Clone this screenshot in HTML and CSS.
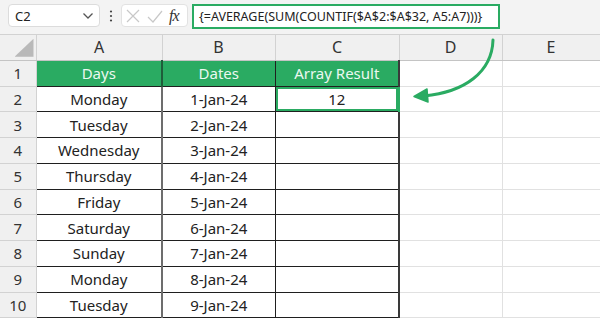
FILE: index.html
```html
<!DOCTYPE html>
<html lang="en">
<head>
  <meta charset="UTF-8" />
  <title>Array formula</title>
  <link rel="stylesheet" href="styles.css">
</head>
<body>

  <div class="toolbar">
    <div class="name-box">
      <span>C2</span>
      <svg class="chev" width="12" height="8" viewBox="0 0 12 8"><path d="M1.5 1.5 L6 6 L10.5 1.5" fill="none" stroke="#555" stroke-width="1.3"/></svg>
    </div>
    <div class="dots">
      <svg width="4" height="14" viewBox="0 0 4 14"><circle cx="2" cy="2.5" r="1.1" fill="#444"/><circle cx="2" cy="7" r="1.1" fill="#444"/><circle cx="2" cy="11.5" r="1.1" fill="#444"/></svg>
    </div>
    <div class="fx-box">
      <svg width="16" height="16" viewBox="0 0 16 16"><path d="M2 2 L14 14 M14 2 L2 14" stroke="#c8c8c8" stroke-width="1.2"/></svg>
      <svg width="18" height="16" viewBox="0 0 18 16"><path d="M2 9 L7 14 L16 3" fill="none" stroke="#c8c8c8" stroke-width="1.2"/></svg>
      <span class="fx"><i>f</i><i>x</i></span>
    </div>
    <div class="formula">{=AVERAGE(SUM(COUNTIF($A$2:$A$32, A5:A7)))}</div>
  </div>

  <div class="sheet">
    <table class="grid">
      <colgroup>
        <col class="c-row"><col class="c-a"><col class="c-b"><col class="c-c"><col class="c-d"><col class="c-e">
      </colgroup>
      <tr class="col-heads">
        <th class="corner"><div class="tri"></div></th>
        <th>A</th><th>B</th><th>C</th><th>D</th><th>E</th>
      </tr>
      <tr>
        <th>1</th>
        <td class="hd first">Days</td><td class="hd">Dates</td><td class="hd last">Array Result</td><td></td><td></td>
      </tr>
      <tr>
        <th>2</th>
        <td class="dt first">Monday</td><td class="dt">1-Jan-24</td><td class="dt last sel">12</td><td></td><td></td>
      </tr>
      <tr>
        <th>3</th>
        <td class="dt first">Tuesday</td><td class="dt">2-Jan-24</td><td class="dt last"></td><td></td><td></td>
      </tr>
      <tr>
        <th>4</th>
        <td class="dt first">Wednesday</td><td class="dt">3-Jan-24</td><td class="dt last"></td><td></td><td></td>
      </tr>
      <tr>
        <th>5</th>
        <td class="dt first">Thursday</td><td class="dt">4-Jan-24</td><td class="dt last"></td><td></td><td></td>
      </tr>
      <tr>
        <th>6</th>
        <td class="dt first">Friday</td><td class="dt">5-Jan-24</td><td class="dt last"></td><td></td><td></td>
      </tr>
      <tr>
        <th>7</th>
        <td class="dt first">Saturday</td><td class="dt">6-Jan-24</td><td class="dt last"></td><td></td><td></td>
      </tr>
      <tr>
        <th>8</th>
        <td class="dt first">Sunday</td><td class="dt">7-Jan-24</td><td class="dt last"></td><td></td><td></td>
      </tr>
      <tr>
        <th>9</th>
        <td class="dt first">Monday</td><td class="dt">8-Jan-24</td><td class="dt last"></td><td></td><td></td>
      </tr>
      <tr>
        <th>10</th>
        <td class="dt first">Tuesday</td><td class="dt">9-Jan-24</td><td class="dt last"></td><td></td><td></td>
      </tr>
    </table>

    <!-- Pfeil von der Formelleiste zur Ergebniszelle -->
    <svg class="arrow" width="600" height="120" viewBox="0 0 600 120">
      <path d="M493 40 C 492 72, 465 92, 424 96" fill="none" stroke="#2aab62" stroke-width="3" stroke-linecap="round"/>
      <path d="M427 89 L414 96.5 L428 102 Z" fill="#2aab62" stroke="#2aab62" stroke-width="1.5" stroke-linejoin="round"/>
    </svg>
  </div>

</body>
</html>
```

FILE: styles.css
```css
body {
  margin: 0;
  width: 600px;
  height: 318px;
  overflow: hidden;
  background: #ffffff;
  font-family: "Noto Sans", "Open Sans", sans-serif;
  color: #222;
}

.toolbar {
  height: 34px;
  background: #f3f3f3;
  display: flex;
  align-items: flex-start;
  padding: 4px 0 0 8px;
  box-sizing: border-box;
}

.name-box {
  width: 92px;
  height: 23px;
  box-sizing: border-box;
  background: #fff;
  border: 1px solid #dcdcdc;
  border-radius: 4px;
  display: flex;
  align-items: center;
  justify-content: space-between;
  padding: 0 5px 0 6px;
  font-size: 13px;
  color: #222;
}

.dots {
  width: 21px;
  height: 23px;
  display: flex;
  align-items: center;
  justify-content: center;
}

.fx-box {
  width: 67px;
  height: 23px;
  box-sizing: border-box;
  background: #fff;
  border: 1px solid #e2e2e2;
  border-radius: 4px;
  display: flex;
  align-items: center;
  gap: 5px;
  padding-left: 3px;
}

.fx {
  font-family: "Liberation Serif", serif;
  font-size: 16px;
  color: #333;
  letter-spacing: -1px;
}

.formula {
  margin-left: 4px;
  width: 308px;
  height: 25px;
  box-sizing: border-box;
  background: #fff;
  border: 2px solid #2aab62;
  font-size: 12.5px;
  line-height: 21px;
  padding-left: 5px;
  white-space: nowrap;
  color: #222;
}

.sheet {
  position: relative;
}

.grid {
  border-collapse: collapse;
  table-layout: fixed;
  width: 600px;
}

.c-row { width: 36px; }
.c-a { width: 126px; }
.c-b { width: 113px; }
.c-c { width: 124px; }
.c-d { width: 103px; }
.c-e { width: 98px; }

.grid tr {
  height: 25.75px;
}

.grid th,
.grid td {
  padding: 0;
  text-align: center;
  font-weight: normal;
  border: 1px solid #e1e1e1;
  white-space: nowrap;
  overflow: hidden;
}

.grid th {
  background: #f0f0f0;
  border-color: #d2d2d2;
  font-size: 15px;
  color: #333;
}

.col-heads th {
  font-size: 16px;
  border-bottom-color: #c4c4c4;
}

.col-heads th:first-child,
.grid tr th:first-child {
  border-left: none;
}

.corner {
  vertical-align: bottom;
}

.tri {
  width: 19px;
  height: 18px;
  margin: 0 2px 3px auto;
  background: #b9b9b9;
  clip-path: polygon(100% 0, 100% 100%, 0 100%);
}

.grid td {
  font-size: 15px;
  color: #222;
}

.grid td.hd {
  background: #2aab62;
  color: #eaf8f0;
  border: 1px solid #2aab62;
  border-right-color: #1f1f1f;
  border-bottom: 1px solid #1f1f1f;
}

.grid td.dt {
  border: 1px solid #1f1f1f;
}

.grid td.first {
  border-right: 2px solid #6d6d6d;
}

.grid td.hd.first {
  border-left-color: #2aab62;
  border-right: 2px solid #1f5c3a;
}

.grid td.last {
  border-right: 2px solid #3a3a3a;
}

.grid td.sel {
  box-shadow: inset 0 0 0 2px #2aab62;
  border-right: 2px solid #2aab62;
}

.arrow {
  position: absolute;
  left: 0;
  top: 0;
  margin-top: -34px;
  pointer-events: none;
}
```
